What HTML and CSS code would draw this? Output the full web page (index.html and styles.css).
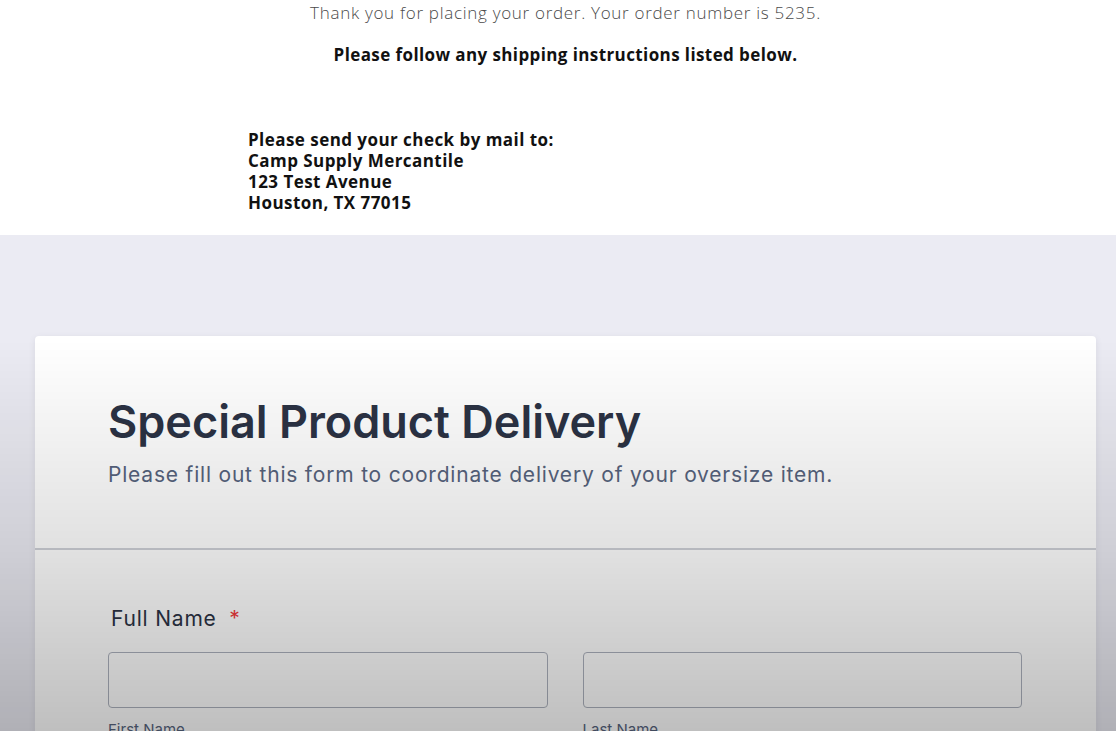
FILE: index.html
```html
<!DOCTYPE html>
<html lang="en">
<head>
    <meta charset="UTF-8">
    <meta name="viewport" content="width=device-width, initial-scale=1.0">
    <title>Order Confirmation - Camp Supply Mercantile</title>
    <link rel="stylesheet" href="styles.css">
</head>
<body>
    <section class="thanks">
        <p class="thanks-line">Thank you for placing your order. Your order number is 5235.</p>
        <p class="thanks-note">Please follow any shipping instructions listed below.</p>
        <div class="mail-to">
            Please send your check by mail to:<br>
            Camp Supply Mercantile<br>
            123 Test Avenue<br>
            Houston, TX 77015
        </div>
    </section>
    <section class="form-area">
        <form class="form-card">
            <div class="form-header">
                <h1>Special Product Delivery</h1>
                <p>Please fill out this form to coordinate delivery of your oversize item.</p>
            </div>
            <div class="form-body">
                <label class="field-label" for="firstName">Full Name <span class="req">*</span></label>
                <div class="name-row">
                    <div class="name-col">
                        <input type="text" id="firstName">
                        <span class="sublabel">First Name</span>
                    </div>
                    <div class="name-col">
                        <input type="text" id="lastName">
                        <span class="sublabel">Last Name</span>
                    </div>
                </div>
            </div>
        </form>
    </section>
    <div class="shade"></div>
</body>
</html>
```

FILE: styles.css
```css
* { box-sizing: border-box; }
body { margin: 0; background: #fff; font-family: "Open Sans", Arial, sans-serif; }
.thanks { height: 235px; background: #fff; padding-top: 2px; }
.thanks-line { margin: 0; padding-left: 15px; text-align: center; font-size: 17px; font-weight: 300; letter-spacing: 0.7px; color: #4a4a4a; line-height: 22px; }
.thanks-note { margin: 20px 0 0; padding-left: 15px; text-align: center; font-size: 17px; font-weight: 700; letter-spacing: 0.4px; color: #111; line-height: 22px; }
.mail-to { margin: 63px 0 0 248px; font-size: 17px; font-weight: 700; letter-spacing: 0.45px; color: #111; line-height: 21px; }
.form-area { background: #ebebf3; padding: 101px 20px 0 35px; min-height: 496px; }
.form-card { background: #fff; border-radius: 4px; width: 1061px; box-shadow: 0 2px 6px rgba(80,80,110,0.12); font-family: Inter, "Noto Sans", sans-serif; }
.form-header { padding: 60px 73px 60px; border-bottom: 2px solid #cfd1d8; }
.form-header h1 { margin: 0; font-size: 45px; font-weight: 600; color: #2c3345; line-height: 52px; }
.form-header p { margin: 14px 0 0; font-size: 21px; letter-spacing: 0.8px; color: #57647e; line-height: 26px; }
.form-body { padding: 57px 74px 40px 73px; }
.field-label { display: block; margin-left: 3px; font-size: 21px; letter-spacing: 0.8px; color: #2c3345; line-height: 24px; }
.req { color: #f23a3c; margin-left: 6px; }
.name-row { display: flex; gap: 35px; margin-top: 21px; }
.name-col { flex: 1; }
.name-col input { display: block; width: 100%; height: 56px; border: 1px solid #adb2be; border-radius: 4px; background: #fff; }
.sublabel { display: block; margin-top: 12px; font-size: 15px; color: #57647e; }
.shade { position: fixed; left: 0; right: 0; top: 340px; bottom: 0; pointer-events: none; background: linear-gradient(to bottom, rgba(0,0,0,0) 0%, rgba(0,0,0,0.12) 55%, rgba(0,0,0,0.25) 100%); }
```
